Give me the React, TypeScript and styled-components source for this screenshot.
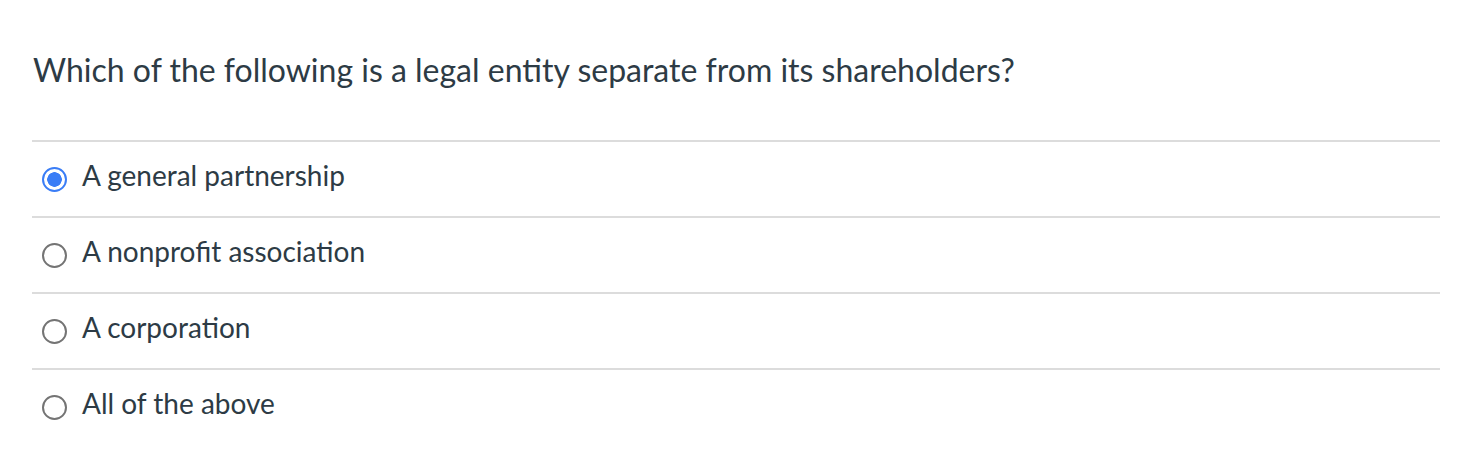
import styled, { createGlobalStyle } from "styled-components";

const GlobalStyle = createGlobalStyle`
    html, body {
        margin: 0;
        padding: 0;
        background: #ffffff;
    }
    body {
        font-family: Lato, "Liberation Sans", sans-serif;
        color: #2d3b45;
    }
`;

const Page = styled.div`
    width: 1472px;
    height: 476px;
    box-sizing: border-box;
    padding: 50px 32px 0 32px;
`;

const Question = styled.h2`
    margin: 0 0 50px 1px;
    font-size: 32px;
    font-weight: 400;
    line-height: 40px;
`;

const Answers = styled.div`
    display: flex;
    flex-direction: column;
`;

const Answer = styled.label`
    display: flex;
    align-items: center;
    gap: 15px;
    height: 74px;
    box-sizing: content-box;
    padding: 0 0 0 10px;
    border-top: 2px solid #dcdcdc;
    font-size: 28px;
    line-height: 32px;
    cursor: pointer;
`;

const Label = styled.span`
    margin-bottom: 8px;
`;

const Radio = styled.span<{ $checked?: boolean }>`
    width: 25px;
    height: 25px;
    box-sizing: border-box;
    border-radius: 50%;
    flex-shrink: 0;
    border: ${(props) =>
        props.$checked ? "2.5px solid #3a7df6" : "2px solid #747474"};
    background: ${(props) =>
        props.$checked
            ? "radial-gradient(circle, #3a7df6 0 7px, #ffffff 7.5px)"
            : "#ffffff"};
`;

const answers = [
    { text: "A general partnership", checked: true },
    { text: "A nonprofit association", checked: false },
    { text: "A corporation", checked: false },
    { text: "All of the above", checked: false },
];

const App = () => {
    return (
        <>
            <GlobalStyle />
            <Page>
                <Question>
                    Which of the following is a legal entity separate from its
                    shareholders?
                </Question>
                <Answers>
                    {answers.map((answer) => (
                        <Answer key={answer.text}>
                            <Radio $checked={answer.checked} />
                            <Label>{answer.text}</Label>
                        </Answer>
                    ))}
                </Answers>
            </Page>
        </>
    );
};

export default App;
